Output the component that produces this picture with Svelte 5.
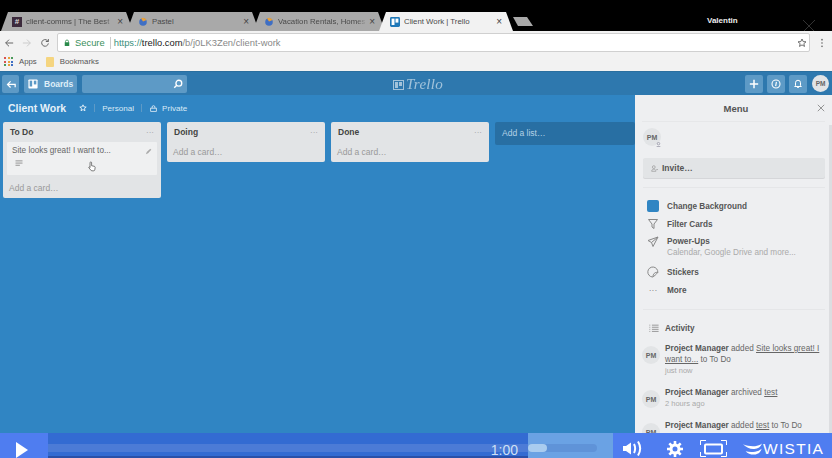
<script>
  const tabs = [
    { title: 'client-comms | The Best', kind: 'slack', fade: true },
    { title: 'Pastel', kind: 'pastel' },
    { title: 'Vacation Rentals, Homes', kind: 'pastel', fade: true },
    { title: 'Client Work | Trello', kind: 'trello', active: true }
  ];
  const lists = [
    { name: 'To Do', cards: true },
    { name: 'Doing' },
    { name: 'Done' }
  ];
</script>

<div class="page">
  <div class="tabstrip">
    {#each tabs as t}
      <div class="tab" class:active={t.active}>
        <div class="tabshape"></div>
        {#if t.kind === 'slack'}
          <span class="fav slack">#</span>
        {:else if t.kind === 'pastel'}
          <svg class="fav" viewBox="0 0 10 10"><circle cx="5" cy="5" r="3.800" fill="#3f6fc4"/><path d="M3 1.500a3.800 3.800 0 0 1 5.500 1.500L5 4.500z" fill="#e8a13a"/></svg>
        {:else}
          <svg class="fav" viewBox="0 0 10 10"><rect width="10" height="10" rx="1.400" fill="#1f78b8"/><rect x="1.600" y="1.600" width="2.900" height="6.400" fill="#fff"/><rect x="5.500" y="1.600" width="2.900" height="4" fill="#fff"/></svg>
        {/if}
        <span class="tabtitle" class:fade={t.fade}>{t.title}</span>
        <span class="tabx">×</span>
      </div>
    {/each}
    <div class="newtab"></div>
    <span class="user">Valentin</span>
    <svg class="winx" viewBox="0 0 14 14"><path d="M1 1l12 12M13 1L1 13" stroke="#333" fill="none"/></svg>
  </div>

  <div class="toolbar">
    <svg class="navicon" viewBox="0 0 12 12"><path d="M11 6H2M6 2L2 6l4 4" stroke="#666" stroke-width="1.200" fill="none"/></svg>
    <svg class="navicon" viewBox="0 0 12 12"><path d="M1 6h9M6 2l4 4-4 4" stroke="#ccc" stroke-width="1.200" fill="none"/></svg>
    <svg class="navicon" viewBox="0 0 12 12"><path d="M10 6.500A4 4 0 1 1 8.800 3L10 4.200M10 1.200v3H7" stroke="#666" stroke-width="1.200" fill="none"/></svg>
    <div class="omni">
      <svg class="lock" viewBox="0 0 8 10"><path d="M2 4.500V3a2 2 0 0 1 4 0v1.500" stroke="#2a8a4a" fill="none"/><rect x="1" y="4" width="6" height="5" fill="#2a8a4a"/></svg>
      <span class="secure">Secure</span>
      <span class="omnisep"></span>
      <span class="url"><span class="scheme">https://</span><b>trello.com</b>/b/j0LK3Zen/client-work</span>
      <svg class="ostar" viewBox="0 0 12 12"><path d="M6 1.200l1.400 3.100 3.400.3-2.600 2.200.8 3.300L6 8.300 3 10.100l.8-3.300L1.200 4.600l3.400-.3z" stroke="#555" fill="none"/></svg>
    </div>
    <svg class="dots" viewBox="0 0 4 12"><circle cx="2" cy="2" r="1" fill="#666"/><circle cx="2" cy="6" r="1" fill="#666"/><circle cx="2" cy="10" r="1" fill="#666"/></svg>
  </div>

  <div class="bookmarks">
    <span class="appsgrid">{#each ['#d9534f','#e8a13a','#4a9a5a','#d9534f','#e8a13a','#3f6fc4','#4a9a5a','#e8a13a','#3f6fc4'] as c}<i style:background={c}></i>{/each}</span>
    <span class="bm">Apps</span>
    <span class="folder"></span>
    <span class="bm">Bookmarks</span>
  </div>

  <div class="hdr">
    <button class="hbtn back" aria-label="Back"><svg viewBox="0 0 12 12"><path d="M11 10V6.500H2M5.500 2.800L1.800 6.500l3.700 3.700" stroke="#fff" stroke-width="1.500" fill="none"/></svg></button>
    <button class="hbtn boards"><svg viewBox="0 0 12 12"><rect width="11" height="11" x=".5" y=".5" rx="1" fill="#fff"/><rect x="2" y="2" width="3" height="7" fill="#5d9ac6"/><rect x="7" y="2" width="3" height="4.500" fill="#5d9ac6"/></svg>Boards</button>
    <div class="search"><svg viewBox="0 0 12 12"><circle cx="7" cy="5" r="3.500" stroke="#fff" stroke-width="1.600" fill="none"/><path d="M4.500 7.500L1.500 10.500" stroke="#fff" stroke-width="1.800"/></svg></div>
    <div class="logo"><span class="logomark"><i></i><i class="short"></i></span><span class="logotext">Trello</span></div>
    <span class="spacer"></span>
    <button class="hbtn sq" aria-label="Add"><svg viewBox="0 0 12 12"><path d="M6 1v10M1 6h10" stroke="#fff" stroke-width="1.800"/></svg></button>
    <button class="hbtn sq" aria-label="Info"><svg viewBox="0 0 12 12"><circle cx="6" cy="6" r="4.800" stroke="#fff" stroke-width="1.300" fill="none"/><path d="M6.500 3.500L5.600 8.500" stroke="#fff" stroke-width="1.400"/></svg></button>
    <button class="hbtn sq" aria-label="Notifications"><svg viewBox="0 0 12 12"><path d="M6 1.500a3 3 0 0 1 3 3V8l1 1H2l1-1V4.500a3 3 0 0 1 3-3z" stroke="#fff" stroke-width="1.200" fill="none"/><path d="M5 10.200h2" stroke="#fff" stroke-width="1.200"/></svg></button>
    <span class="av hav">PM</span>
  </div>

  <div class="board">
    <div class="main">
      <div class="bhead">
        <span class="btitle">Client Work</span>
        <svg class="bstar" viewBox="0 0 12 12"><path d="M6 1.200l1.400 3.100 3.400.3-2.600 2.200.8 3.300L6 8.300 3 10.100l.8-3.300L1.200 4.600l3.400-.3z" stroke="#fff" stroke-width="1.200" fill="none"/></svg>
        <span class="bsep"></span>
        <span class="bmeta">Personal</span>
        <span class="bsep"></span>
        <svg class="block" viewBox="0 0 10 10"><rect x="1" y="4.500" width="8" height="4.500" stroke="#fff" fill="none"/><path d="M3 4.500V3a2 2 0 0 1 4 0v1.500" stroke="#fff" fill="none"/></svg>
        <span class="bmeta">Private</span>
      </div>
      <div class="lists">
        {#each lists as l}
          <div class="list">
            <div class="lhead"><span class="lname">{l.name}</span><span class="lmore">···</span></div>
            {#if l.cards}
              <div class="card">
                <div class="ctext">Site looks great! I want to...</div>
                <svg class="cdesc" viewBox="0 0 9 8"><path d="M.5 1h8M.5 3.500h8M.5 6h5" stroke="#888"/></svg>
                <svg class="cedit" viewBox="0 0 8 8"><path d="M1 7l1-2.500L6 .8 7.200 2 3.500 6z" fill="#aaa"/></svg>
                <svg class="cursor" viewBox="0 0 10 14"><path d="M3.500 1.200c.7 0 1 .5 1 1V6l3.500.8c.8.3 1 .8 1 1.500l-.5 3c-.2 .8-.7 1.200-1.500 1.200H5c-.7 0-1.100-.3-1.500-.9L1 8.500c-.4-.8.500-1.400 1.200-.8l.3 .5V2.200c0-.6.400-1 1-1z" fill="#fff" stroke="#333" stroke-width=".8"/></svg>
              </div>
            {/if}
            <div class="addcard" class:withcards={l.cards}>Add a card…</div>
          </div>
        {/each}
        <div class="addlist">Add a list…</div>
      </div>
    </div>

    <aside class="menu">
      <div class="mhead"><span class="mtitle">Menu</span><svg class="mclose" viewBox="0 0 10 10"><path d="M1 1l8 8M9 1L1 9" stroke="#888" stroke-width="1.100"/></svg></div>
      <div class="mscroll"></div>
      <div class="mbody">
        <div class="members"><span class="av mav">PM<svg class="badge" viewBox="0 0 6 6"><circle cx="3" cy="2" r="1.500" fill="none" stroke="#9a9aaa"/><path d="M.8 5.500h4.400" stroke="#9a9aaa"/></svg></span></div>
        <div class="invite"><svg viewBox="0 0 10 10"><circle cx="4" cy="3" r="2" stroke="#999" fill="none"/><path d="M1 9c0-2 1.200-3 3-3s3 1 3 3zM7.500 6.500h2.500" stroke="#999" fill="none"/></svg>Invite…</div>
        <div class="rule first"></div>
        <div class="mitem"><span class="swatch"></span><span class="mlabel">Change Background</span></div>
        <div class="mitem"><svg class="micon" viewBox="0 0 12 12"><path d="M1.500 1.500h9L7 6v4.500L5 9V6z" stroke="#888" fill="none"/></svg><span class="mlabel">Filter Cards</span></div>
        <div class="mitem two">
          <svg class="micon" viewBox="0 0 12 12"><path d="M11 1L1 4.500l3.500 2 1.500 4z M4.500 6.500L11 1" stroke="#888" fill="none"/></svg>
          <div><div class="mlabel">Power-Ups</div><div class="msub">Calendar, Google Drive and more...</div></div>
        </div>
        <div class="mitem"><svg class="micon" viewBox="0 0 12 12"><path d="M10.800 6.500A5 5 0 1 0 5.500 11c1 0 4.200-3.200 5.300-4.500zM10.800 6.500C8 5.800 5.800 8 6 11" stroke="#888" fill="none"/></svg><span class="mlabel">Stickers</span></div>
        <div class="mitem"><span class="mdots">···</span><span class="mlabel">More</span></div>
        <div class="rule second"></div>
        <div class="acthead"><svg viewBox="0 0 12 10"><path d="M3.500 1h8M3.500 3.500h8M3.500 6h8M3.500 8.500h8M.5 1h1M.5 3.500h1M.5 6h1M.5 8.500h1" stroke="#888" fill="none"/></svg><span class="mlabel">Activity</span></div>
        <div class="act">
          <span class="av aav">PM</span>
          <div class="acttext"><b>Project Manager</b> added <u>Site looks great! I want to...</u> to To Do<div class="when">just now</div></div>
        </div>
        <div class="act">
          <span class="av aav">PM</span>
          <div class="acttext"><b>Project Manager</b> archived <u>test</u><div class="when">2 hours ago</div></div>
        </div>
        <div class="act">
          <span class="av aav">PM</span>
          <div class="acttext"><b>Project Manager</b> added <u>test</u> to To Do</div>
        </div>
      </div>
    </aside>
  </div>

  <div class="player">
    <div class="play"><svg viewBox="0 0 12 16"><path d="M0 0l12 8-12 8z" fill="#fff"/></svg></div>
    <div class="track">
      <div class="trackband"></div>
      <span class="time">1:00</span>
    </div>
    <div class="vol"><div class="volfill"></div></div>
    <div class="ctrls">
      <svg class="cvol" viewBox="0 0 20 15"><path d="M0 5h3l5-3.500v12L3 10H0z" fill="#fff"/><path d="M11 3c1.500 3 1.500 6 0 9M15 .5c2.800 4.500 2.800 9.500 0 14" stroke="#fff" stroke-width="2" fill="none"/></svg>
      <svg class="cgear" viewBox="0 0 16 16"><circle cx="8" cy="8" r="4" stroke="#fff" stroke-width="3" fill="none"/><path d="M8 0v3M8 13v3M0 8h3M13 8h3M2.300 2.300l2.200 2.200M11.500 11.500l2.200 2.200M2.300 13.700l2.200-2.200M11.500 4.500l2.200-2.200" stroke="#fff" stroke-width="2.600"/></svg>
      <svg class="cfull" viewBox="0 0 27 17"><rect x="5" y="4.500" width="17" height="9" rx="1" stroke="#fff" stroke-width="2" fill="none"/><path d="M.5 5V.5H6M21 .5h5.500V5M.5 12v4.500H6M21 16.500h5.500V12" stroke="#fff" fill="none"/></svg>
      <svg class="wmark" viewBox="0 0 22 13"><path d="M0 1c5 2 9 2.500 14 2.200 3-.2 6-1.300 8-3-1.500 4-4.500 6-9 6.300C8 6.800 4 4.500 0 1z M3 9c3 1 7 1.200 11 .6 3-.5 5.500-1.600 7.500-3.500-1 4-4 6.600-8.500 6.800C9 13.100 5.500 11.500 3 9z" fill="#fff"/></svg>
      <span class="wistia">WISTIA</span>
    </div>
  </div>
</div>

<style>
  :global(body) { margin: 0; background: #000; }
  .page { width: 832px; height: 458px; overflow: hidden; display: flex; flex-direction: column; font-family: "Liberation Sans", Arial, sans-serif; color: #444; }

  .tabstrip { height: 31px; background: #000; display: flex; align-items: flex-end; padding-left: 1px; position: relative; flex: none; overflow: hidden; }
  .tab { position: relative; width: 132px; height: 19px; margin-right: -6px; display: flex; align-items: center; padding: 0 10px 0 11px; box-sizing: border-box; font-size: 7.800px; color: #4a4a4a; flex: none; }
  .tab.active { width: 134px; margin-right: 0; padding-right: 11px; }
  .tabshape { position: absolute; inset: 0; background: #a9a9a9; clip-path: polygon(0 100%, 7px 0, calc(100% - 7px) 0, 100% 100%); }
  .tab.active .tabshape { background: #f2f2f2; }
  .tab > :not(.tabshape) { position: relative; }
  .fav { width: 10px; height: 10px; flex: none; margin-right: 4px; }
  .slack { background: #3c2a3c; color: #ddd; font-size: 8px; line-height: 10px; text-align: center; font-weight: 700; }
  .tabtitle { flex: 1; white-space: nowrap; overflow: hidden; min-width: 0; }
  .tabtitle.fade { mask-image: linear-gradient(to right, #000 88%, transparent); }
  .tabx { color: #444; font-size: 10px; margin-left: 2px; }
  .newtab { width: 20px; height: 9px; background: #a9a9a9; margin: 0 0 5px 0; clip-path: polygon(0 0, 70% 0, 100% 100%, 25% 100%); flex: none; }
  .user { position: absolute; left: 707px; top: 16px; color: #eee; font-size: 8px; font-weight: 700; }
  .winx { position: absolute; left: 802px; top: 19px; width: 14px; height: 14px; }

  .toolbar { height: 21px; background: #f2f2f2; display: flex; align-items: center; padding: 2px 0 0 4px; box-sizing: border-box; flex: none; gap: 8px; }
  .navicon { width: 10px; height: 10px; }
  .omni { width: 753px; height: 19px; margin-left: -1px; background: #fff; border: 1px solid #d0d0d0; border-radius: 2px; box-sizing: border-box; display: flex; align-items: center; padding: 0 2px 0 6px; font-size: 9.400px; }
  .lock { width: 6px; height: 8px; margin-right: 5px; }
  .secure { color: #3a8f5c; }
  .omnisep { width: 1px; height: 12px; background: #ccc; margin: 0 3px 0 5px; }
  .url { color: #888; flex: 1; }
  .url b { color: #222; font-weight: 400; }
  .scheme { color: #3a8f7c; }
  .ostar { width: 10px; height: 10px; }
  .dots { width: 4px; height: 10px; margin-left: 2px; }

  .bookmarks { height: 19px; background: #f2f2f2; display: flex; align-items: center; padding-left: 4px; flex: none; font-size: 7.800px; color: #555; box-sizing: border-box; }
  .appsgrid { display: grid; grid-template-columns: repeat(3, 2px); gap: 1.500px; width: 9px; margin-right: 6px; }
  .appsgrid i { display: block; width: 2px; height: 2px; }
  .bm { margin-right: 9px; }
  .folder { width: 8px; height: 10px; background: #f5d580; border-radius: 1px; margin: 0 6px 0 0; }

  .hdr { height: 24px; background: #2e78ae; display: flex; align-items: center; padding: 0 3px 0 2px; flex: none; gap: 5px; position: relative; box-sizing: border-box; border-top: 1px solid #2a6f9f; }
  .hbtn { border: 0; padding: 0; background: #5d9ac6; border-radius: 2px; height: 18px; color: #dfeef8; display: flex; align-items: center; justify-content: center; font: 700 8.500px "Liberation Sans", Arial, sans-serif; }
  .hbtn svg { width: 10px; height: 10px; }
  .back { width: 17px; }
  .boards { width: 53px; gap: 6px; justify-content: flex-start; padding-left: 4px; }
  .search { width: 105px; height: 18px; background: #5d9ac6; border-radius: 2px; display: flex; align-items: center; justify-content: flex-end; padding-right: 4px; box-sizing: border-box; }
  .search svg { width: 10px; height: 10px; }
  .spacer { flex: 1; }
  .logo { position: absolute; left: 393px; top: 4px; display: flex; align-items: center; gap: 2px; opacity: .55; }
  .logomark { width: 11px; height: 10px; border: 1px solid #fff; box-sizing: border-box; display: flex; gap: 1px; padding: 1px; align-items: flex-start; }
  .logomark i { display: block; width: 3px; height: 6px; background: #fff; }
  .logomark i.short { height: 4px; }
  .logotext { font: italic 400 15px "Liberation Serif", serif; color: #fff; letter-spacing: .3px; }
  .sq { width: 18px; margin-right: -1px; }
  .av { border-radius: 50%; background: #e2e4e6; color: #666; font-weight: 700; display: flex; align-items: center; justify-content: center; flex: none; position: relative; }
  .hav { width: 17px; height: 17px; font-size: 6.500px; margin-left: 1px; }

  .board { height: 338px; background: #3085c3; display: flex; flex: none; overflow: hidden; position: relative; }
  .main { flex: 1; min-width: 0; }
  .bhead { height: 27px; padding: 0 0 1px 8px; box-sizing: border-box; display: flex; align-items: center; color: #d9eaf6; font-size: 8.100px; }
  .btitle { font-size: 10.500px; font-weight: 700; color: #e6f1f9; margin-right: 13px; }
  .bstar { width: 8px; height: 8px; }
  .bsep { width: 1px; height: 8px; background: #5d9ac6; margin: 0 7px; }
  .block { width: 7px; height: 7px; margin: 0 5px 0 1px; }
  .lists { display: flex; align-items: flex-start; gap: 6px; padding-left: 3px; }
  .list { width: 158px; background: #e2e4e6; border-radius: 2px; padding: 0 4px; box-sizing: border-box; flex: none; }
  .lhead { height: 20px; display: flex; align-items: center; justify-content: space-between; padding: 0 3px; font-size: 8.500px; font-weight: 700; color: #444; }
  .lmore { color: #999; font-size: 8px; font-weight: 400; }
  .card { background: #eff0f1; height: 33px; border-radius: 1px; position: relative; padding: 3px 5px; box-sizing: border-box; font-size: 8.200px; color: #666; }
  .ctext { line-height: 12px; }
  .cdesc { width: 8px; height: 7px; display: block; margin: 3px 0 0 3px; }
  .cedit { position: absolute; right: 5px; top: 6px; width: 7px; height: 7px; }
  .cursor { position: absolute; left: 81px; top: 19px; width: 8px; height: 11px; }
  .addcard { height: 20px; line-height: 20px; padding-left: 2px; color: #999; font-size: 8.500px; }
  .addcard.withcards { height: 23px; line-height: 26px; }
  .addlist { width: 140px; height: 23px; line-height: 23px; background: #286fa3; border-radius: 2px; color: #b5d2e6; font-size: 8.500px; padding-left: 7px; box-sizing: border-box; }

  .menu { width: 197px; background: #eeeff1; flex: none; position: relative; overflow: hidden; }
  .mhead { height: 27px; margin: 0 7px; padding-left: 5px; display: flex; align-items: center; justify-content: center; position: relative; border-bottom: 1px solid #e6e7e9; box-sizing: border-box; }
  .mtitle { font-size: 9.500px; font-weight: 700; color: #555; }
  .mclose { position: absolute; right: 0; top: 9px; width: 8px; height: 8px; }
  .mscroll { position: absolute; right: 0; top: 30px; width: 3px; bottom: 0; background: #dcdde0; }
  .mbody { padding: 6px 7px 0 8px; }
  .members { height: 19px; }
  .mav { width: 18px; height: 18px; font-size: 7px; }
  .badge { position: absolute; right: 0; bottom: -1px; width: 5px; height: 5px; }
  .invite { height: 20px; margin-top: 11px; background: #e2e4e6; border-radius: 2px; display: flex; align-items: center; padding-left: 8px; gap: 4px; font-size: 8.500px; color: #555; font-weight: 700; box-shadow: 0 1px 0 #d5d6d9; }
  .invite svg { width: 7px; height: 7px; }
  .rule { height: 1px; background: #e5e6e8; }
  .rule.first { margin: 9px 0; }
  .rule.second { margin: 10px 0 12px; }
  .mitem { display: flex; align-items: center; gap: 8px; height: 18px; padding-left: 4px; }
  .mitem.two { height: 30px; align-items: flex-start; padding-top: 3px; box-sizing: border-box; }
  .swatch { width: 12px; height: 12px; background: #3085c3; border-radius: 2px; flex: none; }
  .micon { width: 12px; height: 12px; flex: none; }
  .mlabel { font-weight: 700; color: #555; font-size: 8.200px; line-height: 11px; }
  .msub { color: #aaa; font-size: 8.200px; line-height: 11px; }
  .mdots { width: 12px; color: #888; flex: none; text-align: center; line-height: 1; font-size: 8.500px; }
  .acthead { display: flex; align-items: center; gap: 6px; padding-left: 6px; height: 13px; }
  .acthead svg { width: 10px; height: 9px; }
  .act { display: flex; gap: 4px; margin-top: 11px; margin-left: -1px; font-size: 8.200px; color: #666; line-height: 11px; }
  .acthead + .act { margin-top: 8px; }
  .aav { width: 18px; height: 18px; font-size: 7px; margin: 3px 0 0 0; }
  .acttext { flex: 1; margin-left: 1px; }
  .acttext b { color: #555; }
  .when { color: #aaa; font-size: 7.500px; line-height: 11px; }

  .player { height: 25px; background: #4f7df0; display: flex; flex: none; }
  .play { width: 48px; padding: 9px 0 0 16px; box-sizing: border-box; }
  .play svg { width: 12px; height: 16px; display: block; }
  .track { flex: 1; background: #336bd2; position: relative; }
  .trackband { position: absolute; left: 0; right: 0; top: 11px; height: 8px; background: #4c7bd6; }
  .track::after { content: ""; position: absolute; left: 0; right: 0; bottom: 0; height: 2px; background: #2a50a8; }
  .time { position: absolute; right: 10px; top: 9px; color: #cfe0f5; font-size: 14px; z-index: 1; }
  .vol { width: 85px; background: #6aa2e4; position: relative; flex: none; }
  .volfill { position: absolute; left: 0; top: 11px; width: 69px; height: 8px; background: #5f93d8; border-radius: 4px; }
  .volfill::before { content: ""; position: absolute; left: 0; top: 0; width: 19px; height: 8px; background: #a9ccef; border-radius: 4px; }
  .ctrls { width: 219px; display: flex; align-items: center; flex: none; padding-left: 10px; box-sizing: border-box; }
  .cvol { width: 20px; height: 15px; margin-top: 6px; flex: none; }
  .cgear { width: 16px; height: 16px; margin: 6px 0 0 24px; flex: none; }
  .cfull { width: 27px; height: 17px; margin: 5px 0 0 17px; flex: none; }
  .wmark { width: 19px; height: 12px; margin: 7px 0 0 16px; flex: none; }
  .wistia { font-size: 15.500px; color: #fff; margin: 6px 0 0 1px; letter-spacing: 1.300px; }
</style>
